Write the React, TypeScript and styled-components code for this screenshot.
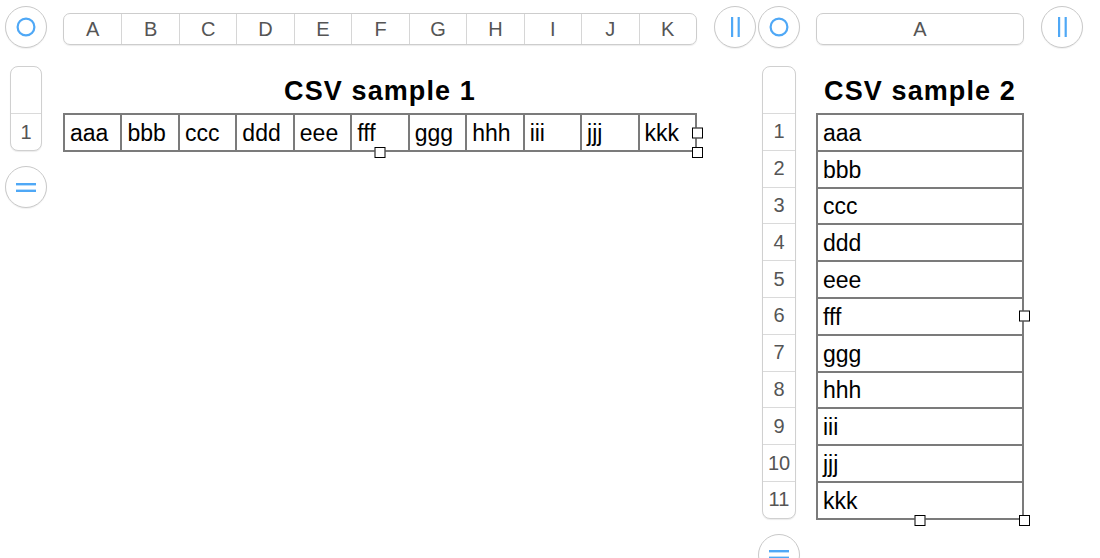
import React from 'react'
import styled, { createGlobalStyle } from 'styled-components'

const BLUE = '#4fa8f6'
const GRID = '#7b7b7b'

const GlobalStyle = createGlobalStyle`
  html, body {
    margin: 0;
    padding: 0;
    background: #fff;
    overflow: hidden;
  }
  body {
    font-family: 'Liberation Sans', Arial, sans-serif;
  }
`

const Page = styled.div`
  display: flex;
  align-items: flex-start;
  padding: 6px 0 0 5px;
  height: 552px;
`

const Widget = styled.div<{ $offset: number }>`
  display: flex;
  align-items: flex-start;
  margin-left: ${p => p.$offset}px;
`

const SideColumn = styled.div`
  display: flex;
  flex-direction: column;
  align-items: center;
  width: 42px;
  flex: none;
`

const RoundButton = styled.div`
  width: 42px;
  height: 42px;
  box-sizing: border-box;
  border: 1.5px solid #c9c9c9;
  border-radius: 50%;
  background: #fff;
  display: flex;
  align-items: center;
  justify-content: center;
  box-shadow: 0 1px 1px rgba(0, 0, 0, 0.06);
  flex: none;
`

const PauseButton = styled(RoundButton)`
  margin-left: 17px;
`

const RowHeader = styled.div<{ $width: number }>`
  margin: 18px 0 15px;
  width: ${p => p.$width}px;
  box-sizing: border-box;
  border: 1px solid #d0d0d0;
  border-radius: 8px;
  background: #fff;
  box-shadow: 0 1px 1px rgba(0, 0, 0, 0.08);
`

const RowCorner = styled.div`
  height: 46px;
`

const RowNumber = styled.div<{ $height: number }>`
  height: ${p => p.$height}px;
  box-sizing: border-box;
  border-top: 1px solid #dadada;
  display: flex;
  align-items: center;
  justify-content: center;
  font-size: 20px;
  color: #555;
`

const MainColumn = styled.div<{ $width: number }>`
  margin-left: 16px;
  width: ${p => p.$width}px;
  flex: none;
`

const ColumnHeader = styled.div<{ $cols: number }>`
  margin-top: 7px;
  height: 32px;
  box-sizing: border-box;
  border: 1px solid #cdcdcd;
  border-radius: 7px;
  display: grid;
  grid-template-columns: repeat(${p => p.$cols}, 1fr);
  box-shadow: 0 1px 1px rgba(0, 0, 0, 0.08);
  overflow: hidden;
`

const HeaderCell = styled.div`
  display: flex;
  align-items: center;
  justify-content: center;
  font-size: 20px;
  color: #555;
  & + & {
    border-left: 1px solid #d6d6d6;
  }
`

const Title = styled.div`
  margin-top: 21px;
  height: 47px;
  box-sizing: border-box;
  padding-bottom: 7px;
  display: flex;
  align-items: flex-end;
  justify-content: center;
  font-size: 27px;
  line-height: 30px;
  font-weight: 700;
  letter-spacing: 1.1px;
  color: #000;
`

const TableGrid = styled.div<{ $cols: number; $cellHeight: number }>`
  position: relative;
  display: grid;
  grid-template-columns: repeat(${p => p.$cols}, 1fr);
  grid-auto-rows: ${p => p.$cellHeight}px;
  gap: 2px;
  border: 2px solid ${GRID};
  background: ${GRID};
`

const Cell = styled.div`
  background: #fff;
  display: flex;
  align-items: center;
  padding: 2px 0 0 5px;
  font-size: 23px;
  color: #000;
  white-space: nowrap;
  overflow: hidden;
`

const Handle = styled.span<{ $x: 'mid' | 'end'; $y: 'mid' | 'end' }>`
  position: absolute;
  width: 11px;
  height: 11px;
  box-sizing: border-box;
  border: 1px solid #000;
  background: #fff;
  ${p => (p.$x === 'end' ? 'right: -8px;' : 'left: 50%;')}
  ${p => (p.$y === 'end' ? 'bottom: -8px;' : 'top: 50%;')}
  transform: translate(${p => (p.$x === 'mid' ? '-50%' : '0')}, ${p => (p.$y === 'mid' ? '-50%' : '0')});
`

const CircleIcon = () => (
  <svg width="22" height="22" viewBox="0 0 22 22">
    <circle cx="11" cy="11" r="8.4" fill="none" stroke={BLUE} strokeWidth="2.2" />
  </svg>
)

const PauseIcon = () => (
  <svg width="9" height="20" viewBox="0 0 9 20">
    <rect x="0" y="0" width="2.2" height="20" fill={BLUE} />
    <rect x="6.6" y="0" width="2.2" height="20" fill={BLUE} />
  </svg>
)

const EqualsIcon = () => (
  <svg width="20" height="9" viewBox="0 0 20 9">
    <rect x="0" y="0" width="20" height="2.4" fill={BLUE} />
    <rect x="0" y="6.6" width="20" height="2.4" fill={BLUE} />
  </svg>
)

const LETTERS = ['A', 'B', 'C', 'D', 'E', 'F', 'G', 'H', 'I', 'J', 'K']
const VALUES = ['aaa', 'bbb', 'ccc', 'ddd', 'eee', 'fff', 'ggg', 'hhh', 'iii', 'jjj', 'kkk']

type SheetProps = {
  title: string
  columns: string[]
  rows: string[][]
  width: number
  rowPitch: number
  headerWidth: number
  offset: number
}

const Sheet = ({ title, columns, rows, width, rowPitch, headerWidth, offset }: SheetProps) => (
  <Widget $offset={offset}>
    <SideColumn>
      <RoundButton><CircleIcon /></RoundButton>
      <RowHeader $width={headerWidth}>
        <RowCorner />
        {rows.map((_, i) => (
          <RowNumber key={i} $height={rowPitch}>{i + 1}</RowNumber>
        ))}
      </RowHeader>
      <RoundButton><EqualsIcon /></RoundButton>
    </SideColumn>
    <MainColumn $width={width}>
      <ColumnHeader $cols={columns.length}>
        {columns.map(c => <HeaderCell key={c}>{c}</HeaderCell>)}
      </ColumnHeader>
      <Title>{title}</Title>
      <TableGrid $cols={columns.length} $cellHeight={rowPitch - 2}>
        {rows.flat().map((v, i) => <Cell key={i}>{v}</Cell>)}
        <Handle $x="end" $y="mid" />
        <Handle $x="mid" $y="end" />
        <Handle $x="end" $y="end" />
      </TableGrid>
    </MainColumn>
    <PauseButton><PauseIcon /></PauseButton>
  </Widget>
)

export default function App() {
  return (
    <>
      <GlobalStyle />
      <Page>
        <Sheet
          title="CSV sample 1"
          columns={LETTERS}
          rows={[VALUES]}
          width={634}
          rowPitch={37}
          headerWidth={32}
          offset={0}
        />
        <Sheet
          title="CSV sample 2"
          columns={['A']}
          rows={VALUES.map(v => [v])}
          width={208}
          rowPitch={36.8}
          headerWidth={34}
          offset={2}
        />
      </Page>
    </>
  )
}
